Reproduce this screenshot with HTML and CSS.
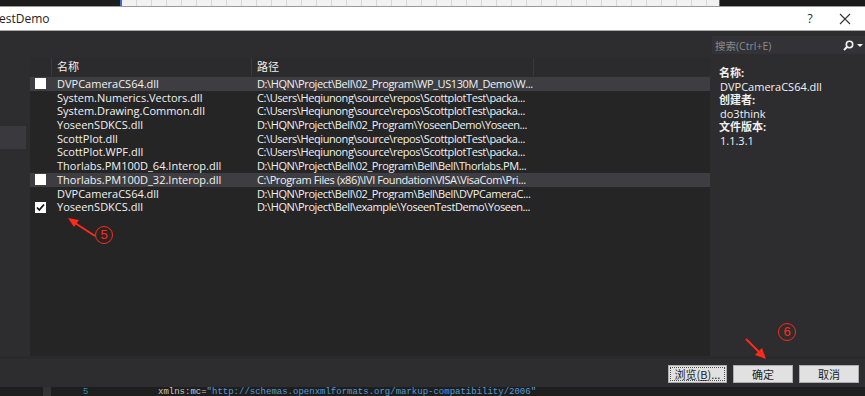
FILE: index.html
```html
<!DOCTYPE html>
<html lang="zh-CN">
<head>
<meta charset="UTF-8">
<title>引用管理器</title>
<link rel="stylesheet" href="styles.css">
</head>
<body>
<div class="screen">
  <div class="backstrip">
    <div class="back-dark"></div>
    <div class="back-grid"></div>
    <div class="back-dark back-right"></div>
  </div>

  <div class="titlebar">
    <span class="title">estDemo</span>
    <span class="title-btn help">?</span>
    <span class="title-btn close">
      <svg width="12" height="12" viewBox="0 0 12 12"><path d="M1 1L11 11M11 1L1 11" stroke="#333" stroke-width="1.1"/></svg>
    </span>
  </div>

  <div class="dialog">
    <div class="nav">
      <div class="nav-item"></div>
    </div>

    <div class="main">
      <div class="list">
        <div class="list-head">
          <div class="col-check"></div>
          <div class="col-name">名称</div>
          <div class="col-path">路径</div>
          <div class="col-rest"></div>
        </div>
        <div class="row selected">
          <div class="col-check"><span class="box"></span></div>
          <div class="col-name">DVPCameraCS64.dll</div>
          <div class="col-path">D:\HQN\Project\Bell\02_Program\WP_US130M_Demo\W...</div>
        </div>
        <div class="row">
          <div class="col-check"></div>
          <div class="col-name">System.Numerics.Vectors.dll</div>
          <div class="col-path">C:\Users\Heqiunong\source\repos\ScottplotTest\packa...</div>
        </div>
        <div class="row">
          <div class="col-check"></div>
          <div class="col-name">System.Drawing.Common.dll</div>
          <div class="col-path">C:\Users\Heqiunong\source\repos\ScottplotTest\packa...</div>
        </div>
        <div class="row">
          <div class="col-check"></div>
          <div class="col-name">YoseenSDKCS.dll</div>
          <div class="col-path">D:\HQN\Project\Bell\02_Program\YoseenDemo\Yoseen...</div>
        </div>
        <div class="row">
          <div class="col-check"></div>
          <div class="col-name">ScottPlot.dll</div>
          <div class="col-path">C:\Users\Heqiunong\source\repos\ScottplotTest\packa...</div>
        </div>
        <div class="row">
          <div class="col-check"></div>
          <div class="col-name">ScottPlot.WPF.dll</div>
          <div class="col-path">C:\Users\Heqiunong\source\repos\ScottplotTest\packa...</div>
        </div>
        <div class="row">
          <div class="col-check"></div>
          <div class="col-name">Thorlabs.PM100D_64.Interop.dll</div>
          <div class="col-path">D:\HQN\Project\Bell\02_Program\Bell\Bell\Thorlabs.PM...</div>
        </div>
        <div class="row selected">
          <div class="col-check"><span class="box"></span></div>
          <div class="col-name">Thorlabs.PM100D_32.Interop.dll</div>
          <div class="col-path">C:\Program Files (x86)\IVI Foundation\VISA\VisaCom\Pri...</div>
        </div>
        <div class="row">
          <div class="col-check"></div>
          <div class="col-name">DVPCameraCS64.dll</div>
          <div class="col-path">D:\HQN\Project\Bell\02_Program\Bell\Bell\DVPCameraC...</div>
        </div>
        <div class="row">
          <div class="col-check">
            <span class="box">
              <svg width="11" height="11" viewBox="0 0 11 11"><path d="M2 5.5L4.3 8L9 2.5" fill="none" stroke="#111" stroke-width="1.8"/></svg>
            </span>
          </div>
          <div class="col-name">YoseenSDKCS.dll</div>
          <div class="col-path">D:\HQN\Project\Bell\example\YoseenTestDemo\Yoseen...</div>
        </div>
      </div>
    </div>

    <div class="side">
      <div class="search">
        <span class="search-text">搜索(Ctrl+E)</span>
        <svg class="search-icon" width="11" height="11" viewBox="0 0 11 11"><circle cx="6.5" cy="4.5" r="3.2" fill="none" stroke="#f1f1f1" stroke-width="1.6"/><path d="M4.2 6.8L1 10" stroke="#f1f1f1" stroke-width="2"/></svg>
        <span class="search-drop"></span>
      </div>
      <dl class="details">
        <dt>名称:</dt>
        <dd>DVPCameraCS64.dll</dd>
        <dt>创建者:</dt>
        <dd>do3think</dd>
        <dt>文件版本:</dt>
        <dd>1.1.3.1</dd>
      </dl>
    </div>
  </div>

  <div class="buttonbar">
    <button class="btn focused">浏览(<u>B</u>)...</button>
    <button class="btn">确定</button>
    <button class="btn">取消</button>
  </div>

  <div class="editor">
    <span class="gutter"></span>
    <span class="lineno">5</span>
    <span class="code"><span class="attr">xmlns:mc=</span><span class="str">"http://schemas.openxmlformats.org/markup-compatibility/2006"</span></span>
  </div>

  <!-- screenshot annotations -->
  <svg class="arrow arrow-5" width="30" height="22" viewBox="0 0 30 22"><path d="M28 20L8 7" stroke="#ff2a1a" stroke-width="2"/><path d="M1 2L12 4L7 11Z" fill="#ff2a1a"/></svg>
  <span class="mark mark-5">5</span>
  <svg class="arrow arrow-6" width="24" height="24" viewBox="0 0 24 24"><path d="M2 2L16 16" stroke="#ff2a1a" stroke-width="2"/><path d="M22 22L11 18L18 11Z" fill="#ff2a1a"/></svg>
  <span class="mark mark-6">6</span>
</div>
</body>
</html>
```

FILE: styles.css
```css
body {
  margin: 0;
  background: #2d2d30;
  font-family: "Open Sans", "Noto Sans CJK SC", sans-serif;
  color: #f1f1f1;
}
.screen {
  position: relative;
  width: 865px;
  height: 396px;
  overflow: hidden;
}

/* strip of the window behind the dialog */
.backstrip {
  display: flex;
  height: 6px;
  border-bottom: 1px solid #9a9a9a;
}
.back-dark {
  width: 120px;
  background: #1c1c1c;
  border-right: 2px solid #3c6ec8;
}
.back-grid {
  flex: 1;
  background: repeating-linear-gradient(90deg, #f2f2f2 0, #f2f2f2 14px, #d8d8d8 14px, #d8d8d8 15px);
}
.back-right {
  width: 145px;
  border-right: none;
  border-left: 1px solid #3c6ec8;
  background: #1a1a1a;
}

.titlebar {
  display: flex;
  align-items: center;
  height: 23px;
  background: #fff;
  border-bottom: 1px solid #a8a8a8;
  color: #1e1e1e;
  font-size: 12px;
}
.title {
  flex: 1;
  margin-left: -1px;
}
.title-btn {
  display: flex;
  justify-content: center;
  width: 34px;
  font-size: 12px;
}
.close {
  width: 36px;
  padding-right: 2px;
}

.dialog {
  display: flex;
  height: 325px;
}
.nav {
  width: 30px;
  padding-top: 95px;
  box-sizing: border-box;
}
.nav-item {
  width: 26px;
  height: 23px;
  background: #3a3a3e;
}
.main {
  width: 680px;
  padding-top: 27px;
}
.list {
  height: 298px;
  background: #252526;
  font-size: 11px;
}
.list-head {
  display: flex;
  height: 18px;
  line-height: 18px;
  background: #2b2b2d;
  border-bottom: 1px solid #2d2d30;
}
.list-head > div {
  border-right: 1px solid #3a3a3e;
  box-sizing: border-box;
}
.col-check {
  display: flex;
  align-items: center;
  width: 22px;
  padding-left: 5px;
  box-sizing: border-box;
}
.col-name {
  width: 200px;
  padding-left: 5px;
  box-sizing: border-box;
  white-space: nowrap;
}
.col-path {
  width: 282px;
  padding-left: 5px;
  box-sizing: border-box;
  white-space: nowrap;
  overflow: hidden;
}
.row .col-path {
  letter-spacing: -0.4px;
}
.list-head .col-rest {
  flex: 1;
  border-right: none;
}
.row {
  display: flex;
  height: 13.7px;
  line-height: 13.7px;
}
.row.selected {
  background: #3e3e42;
}
.box {
  display: flex;
  width: 11px;
  height: 11px;
  background: #fff;
}

.side {
  flex: 1;
  padding: 5px 0 0 2px;
}
.search {
  display: flex;
  align-items: center;
  height: 18px;
  background: #333337;
  padding-left: 3px;
  font-size: 10.5px;
}
.search-text {
  flex: 1;
  color: #8a8a8e;
}
.search-icon {
  margin-right: 3px;
}
.search-drop {
  width: 0;
  height: 0;
  margin-right: 2px;
  border-left: 3px solid transparent;
  border-right: 3px solid transparent;
  border-top: 3px solid #f1f1f1;
}
.details {
  margin: 12px 0 0 7px;
  font-size: 11px;
  line-height: 13.5px;
}
.details dt {
  font-weight: bold;
}
.details dd {
  margin: 0 0 0 1px;
}

.buttonbar {
  display: flex;
  justify-content: flex-end;
  align-items: center;
  gap: 6px;
  height: 27px;
  padding: 1px 6px 0 0;
  border-top: 3px solid #2a2a2c;
  background: #2d2d30;
}
.btn {
  width: 60px;
  height: 18px;
  padding: 0;
  background: #e1e1e1;
  border: 1px solid #adadad;
  color: #1e1e1e;
  font-family: "Noto Sans CJK SC", sans-serif;
  font-size: 11px;
  line-height: 16px;
}
.btn.focused {
  width: 59px;
  outline: 1px dotted #555;
  outline-offset: -3px;
}

.editor {
  display: flex;
  align-items: center;
  height: 11px;
  background: #1e1e1e;
  font-family: "Liberation Mono", monospace;
  font-size: 9px;
  line-height: 11px;
}
.gutter {
  width: 8px;
  height: 11px;
  margin-left: 43px;
  background: #333;
}
.lineno {
  width: 40px;
  padding-left: 32px;
  color: #2b91af;
}
.code {
  padding-left: 35px;
  white-space: nowrap;
}
.attr {
  color: #c8c8c8;
}
.str {
  color: #569cd6;
}

.arrow {
  position: absolute;
}
.arrow-5 {
  left: 67px;
  top: 216px;
}
.arrow-6 {
  left: 744px;
  top: 337px;
}
.mark {
  position: absolute;
  width: 16px;
  height: 16px;
  border: 1.2px solid #ff2a1a;
  border-radius: 50%;
  color: #ff2a1a;
  font-family: "Liberation Sans", sans-serif;
  font-size: 13px;
  line-height: 16px;
  text-align: center;
}
.mark-5 {
  left: 95px;
  top: 226px;
}
.mark-6 {
  left: 778px;
  top: 323px;
}
```
